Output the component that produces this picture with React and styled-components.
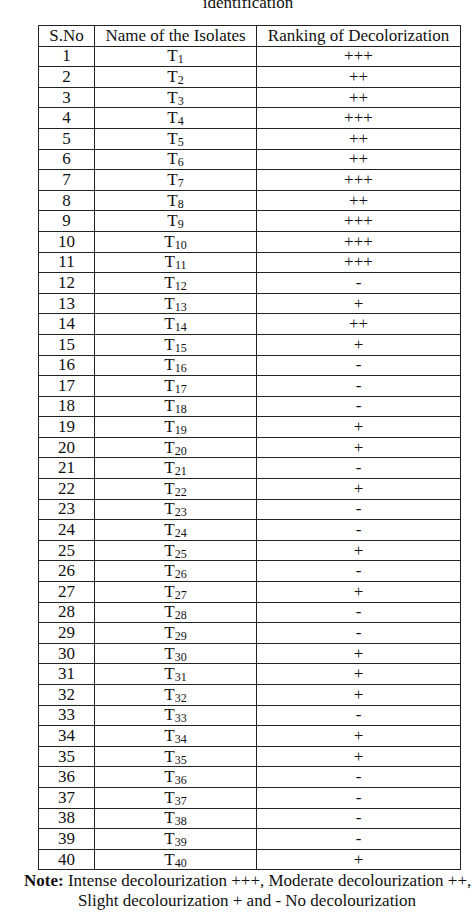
import styled, { createGlobalStyle } from "styled-components";

const ranks = [
    "+++", "++", "++", "+++", "++", "++", "+++", "++", "+++", "+++",
    "+++", "-", "+", "++", "+", "-", "-", "-", "+", "+",
    "-", "+", "-", "-", "+", "-", "+", "-", "-", "+",
    "+", "+", "-", "+", "+", "-", "-", "-", "-", "+",
];

const GlobalStyle = createGlobalStyle`
    html, body {
        margin: 0;
        padding: 0;
        background: #fff;
        overflow: hidden;
    }
    body {
        font-family: "Liberation Serif", "Times New Roman", serif;
        color: #111;
    }
`

const App = () => {
    return (
        <Page>
            <GlobalStyle />
            <Caption>identification</Caption>
            <Table>
                <colgroup>
                    <col style={{ width: 56 }} />
                    <col style={{ width: 162 }} />
                    <col style={{ width: 204 }} />
                </colgroup>
                <thead>
                    <Row>
                        <HeadCell>S.No</HeadCell>
                        <HeadCell>Name of the Isolates</HeadCell>
                        <HeadCell>Ranking of Decolorization</HeadCell>
                    </Row>
                </thead>
                <tbody>
                    {ranks.map((rank, i) => (
                        <Row key={i}>
                            <Cell>{i + 1}</Cell>
                            <Cell>
                                T<Sub>{i + 1}</Sub>
                            </Cell>
                            <Cell>{rank}</Cell>
                        </Row>
                    ))}
                </tbody>
            </Table>
            <Note>
                <b>Note:</b> Intense decolourization +++, Moderate decolourization ++,
                <br />
                Slight decolourization + and - No decolourization
            </Note>
        </Page>
    )
}

const Page = styled.main`
    width: 474px;
    height: 921px;
`

const Caption = styled.div`
    margin-top: -5px;
    height: 16px;
    line-height: 16px;
    font-size: 17px;
    text-align: center;
    padding-left: 22px;
`

const Table = styled.table`
    margin: 14px 0 0 38px;
    width: 422px;
    border-collapse: collapse;
    table-layout: fixed;
    border: 1.5px solid #222;
`

const Row = styled.tr`
    height: 20.6px;
`

const HeadCell = styled.th`
    font-weight: normal;
    font-size: 17px;
    line-height: 18px;
    padding: 0;
    border: 1.2px solid #222;
    text-align: center;
    white-space: nowrap;
`

const Cell = styled.td`
    font-size: 17px;
    line-height: 18px;
    padding: 0;
    border: 1.2px solid #222;
    text-align: center;
    white-space: nowrap;
`

const Sub = styled.sub`
    font-size: 12px;
    vertical-align: -2px;
    line-height: 0;
`

const Note = styled.p`
    margin: 1px 0 0 24px;
    width: 446px;
    font-size: 17px;
    line-height: 20px;
    text-align: center;
    white-space: nowrap;
    b {
        font-weight: bold;
    }
`

export default App;
